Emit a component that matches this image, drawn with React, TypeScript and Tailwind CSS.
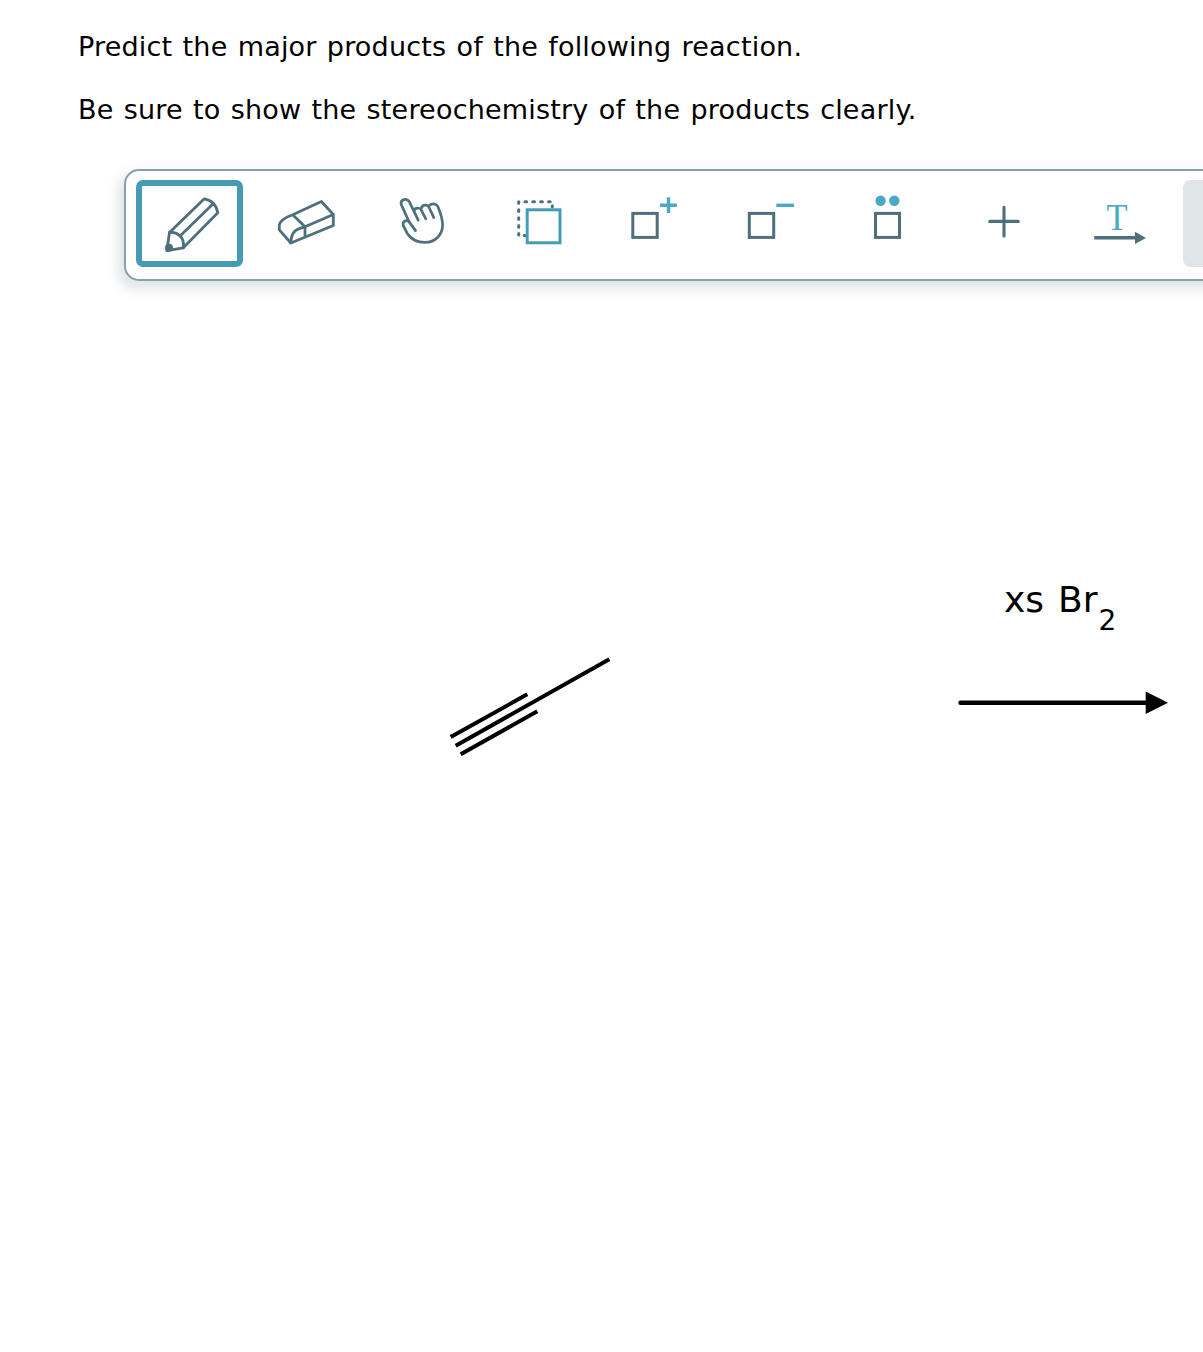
import React from 'react'
import clsx from 'clsx'

const SLATE = '#4f6f7c'
const SKY = '#4ba9c5'

const PencilIcon = () => (
  <g stroke={SLATE} strokeWidth="2.8" strokeLinejoin="round" strokeLinecap="round">
    <path d="M33.5 52.5 68.3 18.8Q79.5 20.5 81.8 32.7L47.3 67.8 30.8 70.6Z" />
    <path d="M33.5 52.5C40 51.5 49 56 47.3 67.8M44.8 55.3 76.4 24.6" />
    <circle cx="33" cy="67.7" r="2.6" fill={SLATE} />
  </g>
)

const EraserIcon = () => (
  <g stroke={SLATE} strokeWidth="2.8" strokeLinejoin="round">
    <path d="M69.4 21.5 81.3 34.5V45.5L38.9 63 27.3 49.8V45Q28.5 39 40.7 34.7Z" />
    <path d="M81.3 34.5 53 46.8 40.7 34.7M53 46.8V57M53 46.8C42.5 49 39 53 38.9 63" />
  </g>
)

const HandIcon = () => (
  <g stroke={SLATE} strokeWidth="2.7" strokeLinejoin="round" strokeLinecap="round">
    <path d="M50.2 40.2 41.3 21.6C38.5 17.4 32 19.6 33.2 24.4L41 41.8" />
    <path d="M47.5 50.6 41.5 42.4C38.8 38.7 34 41.4 35.3 45.6L39.5 53.9C44 60.2 50 62.4 57 62.4 67.5 62.4 74.6 54.7 74.6 44.7 74.6 37.7 72 32 69.8 26.4 68 23.2 63.5 23.2 61 25.6" />
    <path d="M46.2 30.6C47 27.4 51.8 27.2 53.2 29.9L57.8 38.9M53.3 28.6C54 24.6 59.2 24 61 27.2L65.8 37.6" />
  </g>
)

const SelectIcon = () => (
  <>
    <g stroke={SLATE} strokeWidth="3" strokeLinecap="round">
      <path d="M34.7 21.8V23.3M34.7 29.8V31.4M34.7 37.8V39.3M34.7 45.6V47.2M34.7 53.6V55.1" />
      <path d="M40.9 21.7H42.6M48.8 21.7H50.5M56.7 21.7H58.4M64.6 21.7H66.2M68.3 25.8V27M40.2 55.4H41" />
    </g>
    <rect x="43.2" y="29.8" width="32.8" height="33" fill="#fff" stroke="#459db5" strokeWidth="3" />
  </>
)

const PositiveIcon = () => (
  <>
    <rect x="32.8" y="33.4" width="24.4" height="24" stroke={SLATE} strokeWidth="3" />
    <path d="M60 25.3H77M68.5 17.3V33" stroke={SKY} strokeWidth="3.4" />
  </>
)

const NegativeIcon = () => (
  <>
    <rect x="33.3" y="33.4" width="24.4" height="24" stroke={SLATE} strokeWidth="3" />
    <path d="M60.3 25.3H78" stroke={SKY} strokeWidth="3.4" />
  </>
)

const LonePairIcon = () => (
  <>
    <rect x="43.5" y="33.4" width="24" height="24" stroke={SLATE} strokeWidth="3" />
    <circle cx="48.6" cy="20.8" r="5.2" fill={SKY} />
    <circle cx="62.3" cy="20.8" r="5.2" fill={SKY} />
  </>
)

const PlusIcon = () => (
  <path d="M41.7 41.4H70.3M56 27.3V56" stroke={SLATE} strokeWidth="3.1" strokeLinecap="round" />
)

const ArrowTextIcon = () => (
  <>
    <text
      x="42.6"
      y="50"
      fontSize="37"
      textLength="21"
      lengthAdjust="spacingAndGlyphs"
      fill={SKY}
      className="font-['Liberation_Serif',serif]"
    >
      T
    </text>
    <path d="M30.2 57.8H72" stroke={SLATE} strokeWidth="3.4" />
    <path d="M71 51.8V64L82 57.9Z" fill={SLATE} />
  </>
)

const tools = [
  { name: 'pencil', icon: PencilIcon },
  { name: 'eraser', icon: EraserIcon },
  { name: 'hand', icon: HandIcon },
  { name: 'select', icon: SelectIcon },
  { name: 'positive', icon: PositiveIcon },
  { name: 'negative', icon: NegativeIcon },
  { name: 'lone-pair', icon: LonePairIcon },
  { name: 'plus', icon: PlusIcon },
  { name: 'arrow-text', icon: ArrowTextIcon },
]

const Toolbar: React.FC = () => {
  const [active, setActive] = React.useState('pencil')

  return (
    <div className="ml-[124px] flex h-[112px] w-[1300px] gap-[9px] rounded-[15px] border-2 border-[#8a9fa7] bg-white pt-[9px] pl-[10px] shadow-[-4px_6px_12px_2px_rgba(79,111,124,0.18)]">
      {tools.map((tool) => (
        <button
          key={tool.name}
          aria-label={tool.name}
          onClick={() => setActive(tool.name)}
          className={clsx(
            'h-[87px] w-[107px] shrink-0 rounded-[7px]',
            active === tool.name && 'ring-6 ring-[#459bb5] ring-inset'
          )}
        >
          <svg width="107" height="87" viewBox="0 0 107 87" fill="none">
            <tool.icon />
          </svg>
        </button>
      ))}
      <div className="ml-[3px] h-[87px] w-[107px] shrink-0 rounded-[8px] bg-[#e0e5e7]" />
    </div>
  )
}

const Propyne = () => (
  <svg width="170" height="106" viewBox="0 0 170 106" fill="none" stroke="#000" strokeWidth="4">
    <path d="M10.7 95.7 164.3 9.3M5.7 87 82.3 44.3M15.7 104.3 92.3 61.3" />
  </svg>
)

const ReactionArrow = () => (
  <svg width="214" height="24" viewBox="0 0 214 24">
    <path d="M5.5 12.7H192" stroke="#000" strokeWidth="4.4" strokeLinecap="round" />
    <path d="M190.7 1.5V24L213 12.7Z" />
  </svg>
)

const App: React.FC = () => {
  return (
    <div className="h-[1352px] w-full overflow-hidden bg-white font-['DejaVu_Sans',Verdana,sans-serif] text-black">
      {/* Question */}
      <div className="flex h-[169px] flex-col gap-[23px] pt-[27px] pl-[78px] text-[27px] leading-[40px] tracking-[0.2px] whitespace-nowrap [word-spacing:1.4px]">
        <p>Predict the major products of the following reaction.</p>
        <p>Be sure to show the stereochemistry of the products clearly.</p>
      </div>

      <Toolbar />

      {/* Reaction scheme */}
      <div className="flex pt-[289px]">
        <div className="ml-[445px] w-[510px] pt-[80px]">
          <Propyne />
        </div>
        <div className="w-[214px]">
          <div className="flex h-[120px] pt-[6px] pl-[49px] text-[36px] leading-[48px] whitespace-nowrap [word-spacing:2.5px]">
            <span>xs Br</span>
            <span className="pt-[21px] pl-px text-[28px]">2</span>
          </div>
          <ReactionArrow />
        </div>
      </div>
    </div>
  )
}

export default App
